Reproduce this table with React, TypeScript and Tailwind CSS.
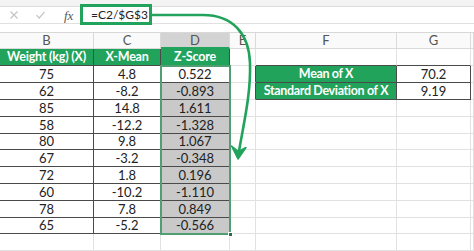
import React from "react";

const W = { B: 94, C: 67, D: 69, E: 26, F: 141, G: 74, H: 3 };
const bData = ["75", "62", "85", "58", "80", "67", "72", "60", "78", "65"];
const cData = ["4.8", "-8.2", "14.8", "-12.2", "9.8", "-3.2", "1.8", "-10.2", "7.8", "-5.2"];
const dData = ["0.522", "-0.893", "1.611", "-1.328", "1.067", "-0.348", "0.196", "-1.110", "0.849", "-0.566"];

const font = { fontFamily: "Lato, 'Open Sans', Arial, sans-serif" };

function Cell({
  w,
  className = "",
  children,
}: {
  w: number;
  className?: string;
  children?: React.ReactNode;
}) {
  return (
    <div
      className={`flex shrink-0 items-center justify-center whitespace-nowrap border-r border-b ${className}`}
      style={{ width: w }}
    >
      {children}
    </div>
  );
}

export default function App() {
  const rows = Array.from({ length: 11 }, (_, i) => i);
  return (
    <div
      className="relative h-[251px] w-[474px] overflow-hidden bg-white text-[#222]"
      style={font}
    >
      {/* top strip */}
      <div className="h-[7px] border-b border-[#dcdcdc] bg-[#f3f3f3]" />
      {/* formula bar */}
      <div className="flex h-[17px] items-center border-b border-[#e0e0e0] bg-white">
        <div className="flex w-[80px] items-center">
          <svg width="8" height="8" viewBox="0 0 8 8" className="ml-[10px]">
            <path d="M0.5 0.5L7.5 7.5M7.5 0.5L0.5 7.5" stroke="#c4c4c4" strokeWidth="1.2" />
          </svg>
          <svg width="9" height="8" viewBox="0 0 9 8" className="ml-[18px]">
            <path d="M0.5 4.2L3.2 7L8.5 0.8" stroke="#c4c4c4" strokeWidth="1.2" fill="none" />
          </svg>
          <span
            className="ml-[19px] text-[13px] italic leading-none text-[#555]"
            style={{ fontFamily: "'Liberation Serif', serif" }}
          >
            fx
          </span>
        </div>
        <div className="pl-[11px] text-[12px] leading-none text-[#222]">=C2/$G$3</div>
      </div>
      <div className="h-[8px]" />
      {/* column letters */}
      <div className="flex h-[17px] border-t border-[#d8d8d8] text-[13px] leading-none text-[#555]">
        <Cell w={W.B} className="border-[#dadada] bg-[#fafafa]">B</Cell>
        <Cell w={W.C} className="border-[#dadada] bg-[#fafafa]">C</Cell>
        <Cell w={W.D} className="border-b-2 border-r-[#dadada] border-b-[#21a35c] bg-[#d3d3d3]">D</Cell>
        <Cell w={W.E} className="border-[#dadada] bg-[#fafafa]">E</Cell>
        <Cell w={W.F} className="border-[#dadada] bg-[#fafafa]">F</Cell>
        <Cell w={W.G} className="border-[#dadada] bg-[#fafafa]">G</Cell>
        <Cell w={W.H} className="border-[#dadada] bg-[#fafafa]" />
      </div>
      {/* header row 1 */}
      <div className="flex h-[17px] text-[12.5px] font-bold leading-none tracking-[-0.2px] text-white">
        <Cell w={W.B} className="border-[#4a4a4a] bg-[#21a35c]">Weight (kg) (X)</Cell>
        <Cell w={W.C} className="border-[#4a4a4a] bg-[#21a35c]">X-Mean</Cell>
        <Cell w={W.D} className="border-[#4a4a4a] bg-[#21a35c]">Z-Score</Cell>
        <Cell w={W.E} className="border-r-[#e1e1e1] border-b-[#e1e1e1]" />
        <Cell w={W.F} className="border-r-[#e1e1e1] border-b-[#4a4a4a]" />
        <Cell w={W.G} className="border-r-[#e1e1e1] border-b-[#4a4a4a]" />
        <Cell w={W.H} className="border-[#e1e1e1]" />
      </div>
      {rows.map((i) => {
        const inTable = i < 10;
        const h = i === 9 || i === 4 ? "h-[16px]" : "h-[17px]";
        const mean = i === 0 || i === 1;
        return (
          <div key={i} className={`flex ${h} text-[13px] leading-none text-[#222]`}>
            <Cell w={W.B} className={inTable ? "border-[#4a4a4a]" : "border-[#e1e1e1]"}>
              {bData[i]}
            </Cell>
            <Cell w={W.C} className={inTable ? "border-[#4a4a4a]" : "border-[#e1e1e1]"}>
              {cData[i]}
            </Cell>
            <Cell
              w={W.D}
              className={
                inTable
                  ? `border-[#4a4a4a] ${i === 0 ? "bg-white" : "bg-[#c9c9c9]"}`
                  : "border-[#e1e1e1]"
              }
            >
              {dData[i]}
            </Cell>
            <Cell
              w={W.E}
              className={`border-b-[#e1e1e1] ${mean ? "border-r-[#4a4a4a]" : "border-r-[#e1e1e1]"}`}
            />
            <Cell
              w={W.F}
              className={
                mean
                  ? "border-[#4a4a4a] bg-[#21a35c] text-[12.5px] font-bold tracking-[-0.35px] text-white"
                  : "border-r-[#e1e1e1] border-b-[#e1e1e1]"
              }
            >
              {i === 0 ? "Mean of X" : i === 1 ? "Standard Deviation of X" : null}
            </Cell>
            <Cell w={W.G} className={mean ? "border-[#4a4a4a]" : "border-[#e1e1e1]"}>
              {i === 0 ? "70.2" : i === 1 ? "9.19" : null}
            </Cell>
            <Cell w={W.H} className="border-[#e1e1e1]" />
          </div>
        );
      })}

      {/* selection overlay */}
      <div className="pointer-events-none absolute left-[160px] top-[65px] h-[170px] w-[71px] border-2 border-[#4f9f73]" />
      <div className="pointer-events-none absolute left-[228px] top-[232px] h-[5px] w-[5px] border border-white bg-[#217346]" />

      {/* green annotation box */}
      <div className="pointer-events-none absolute left-[80px] top-[4px] h-[21px] w-[72px] border-[3px] border-[#22a35c]" />
      {/* arrow */}
      <svg
        className="pointer-events-none absolute left-0 top-0"
        width="474"
        height="251"
        viewBox="0 0 474 251"
      >
        <path
          d="M152 15 H203 C233 15 249 34 250 63 C251 93 244 122 239 151"
          fill="none"
          stroke="#22a35c"
          strokeWidth="2.6"
          strokeLinecap="round"
        />
        <path
          d="M231.5 146 L238 159 L246 147.5 L238.5 151.5 Z"
          fill="#22a35c"
          stroke="#22a35c"
          strokeWidth="1.5"
          strokeLinejoin="round"
        />
      </svg>
    </div>
  );
}
